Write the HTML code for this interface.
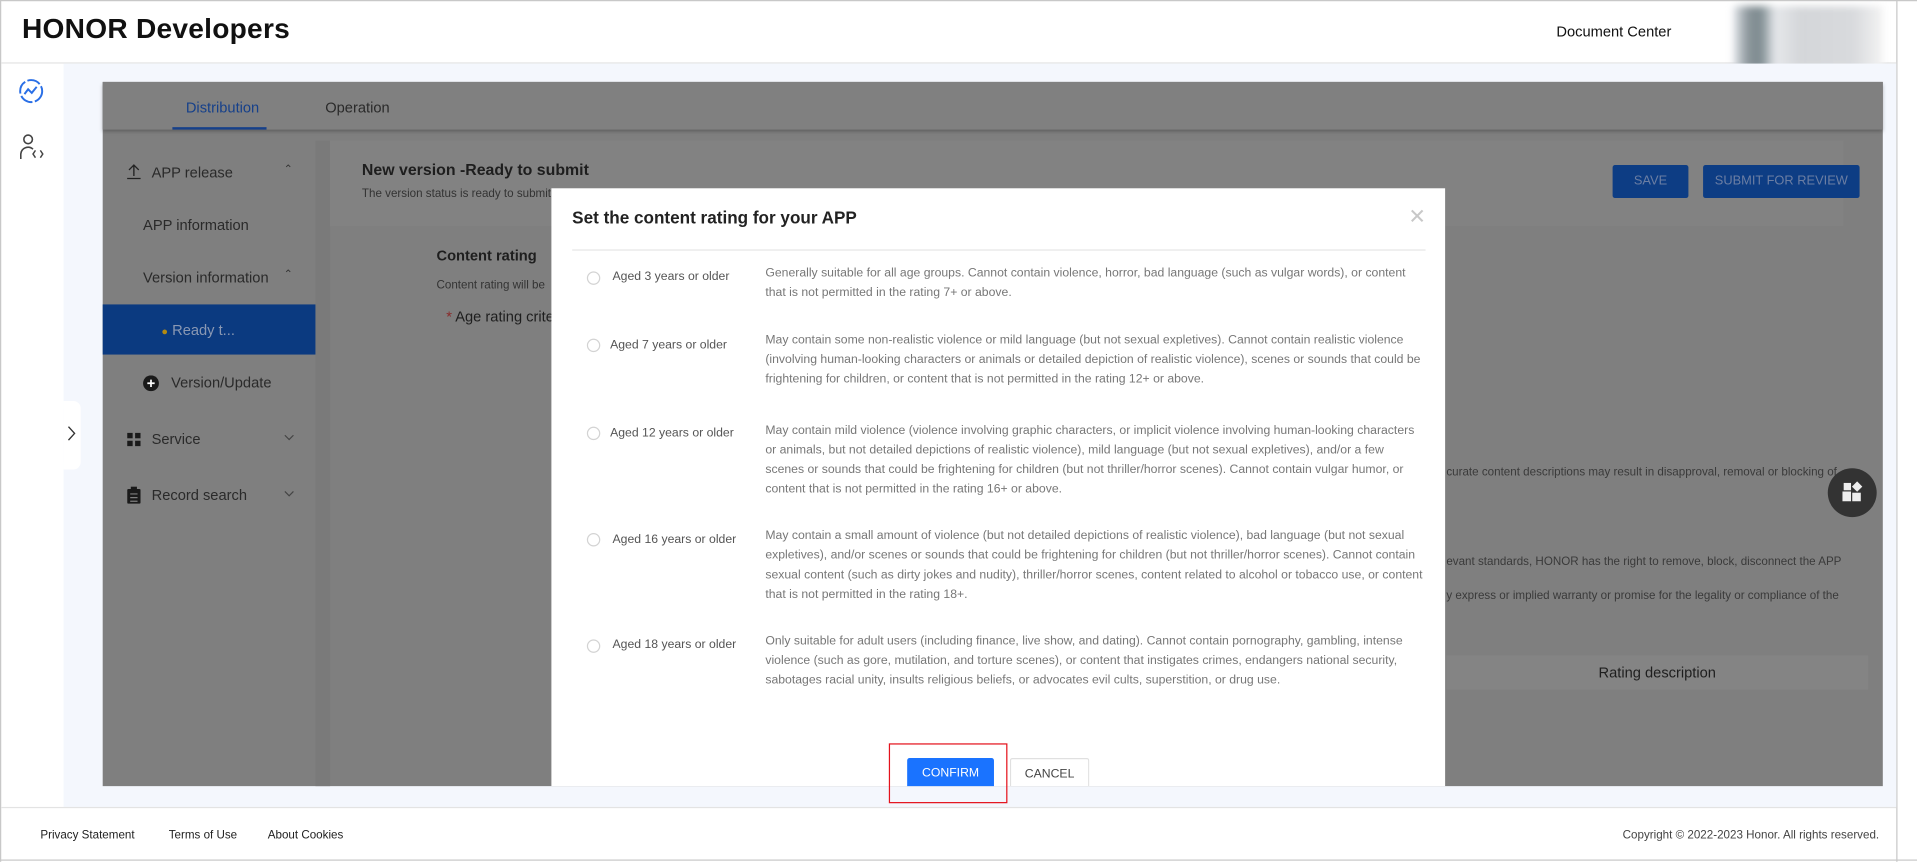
<!DOCTYPE html>
<html><head><meta charset="utf-8">
<style>
*{box-sizing:border-box;margin:0;padding:0}
html,body{width:1917px;height:862px;overflow:hidden;background:#fff;font-family:"Liberation Sans",sans-serif}
#w{position:absolute;left:0;top:0;width:1568px;height:705px;transform:scale(1.2226);transform-origin:0 0;overflow:hidden;background:#fff}
.a{position:absolute;white-space:nowrap}
.g{color:#2a2a2a}
.desc{font-size:10px;line-height:16px;color:#777}
.lab{font-size:10px;color:#555}
.rad{position:absolute;width:11px;height:11px;border:1px solid #d3d3d3;border-radius:50%;background:#fff}
</style></head><body><div id="w">
<!-- frame lines -->
<div class="a" style="left:0;top:0;width:1568px;height:1px;background:#c8c8c8"></div>
<div class="a" style="left:0;top:0;width:1px;height:705px;background:#c8c8c8"></div>
<div class="a" style="left:1551px;top:0;width:1px;height:705px;background:#c8c8c8"></div>
<div class="a" style="left:0;top:703px;width:1568px;height:1px;background:#c8c8c8"></div>
<!-- header -->
<div class="a" style="left:1px;top:51px;width:1550px;height:1px;background:#e3e3e3"></div>
<div class="a" style="left:18px;top:10px;font-size:23px;font-weight:bold;color:#111;letter-spacing:0.2px">HONOR Developers</div>
<div class="a" style="left:1273px;top:19px;font-size:12px;color:#111">Document Center</div>
<div class="a" style="left:1418px;top:5px;width:122px;height:52px;background:linear-gradient(90deg,#dfe3e8 0,#8a9499 10%,#7c8a8f 18%,#e6e8eb 28%,#d4d6d9 45%,#d8dadd 80%,#f3f3f3 100%);filter:blur(3px)"></div>
<!-- content bg -->
<div class="a" style="left:52px;top:52px;width:1499px;height:608px;background:#f4f7fd"></div>
<!-- rail icons -->
<svg class="a" style="left:15px;top:64px" width="21" height="21" viewBox="0 0 21 21"><circle cx="10.5" cy="10.5" r="9" fill="none" stroke="#2a6fe6" stroke-width="1.6" stroke-dasharray="11 2"/><path d="M5 13l3-4 3 3 4-5" fill="none" stroke="#2a6fe6" stroke-width="1.6"/></svg>
<svg class="a" style="left:15px;top:109px" width="22" height="22" viewBox="0 0 22 22"><circle cx="8" cy="5" r="3.5" fill="none" stroke="#444" stroke-width="1.3"/><path d="M2 21v-4a6 6 0 0 1 10-4" fill="none" stroke="#444" stroke-width="1.3"/><path d="M14 14l-2 3 2 3M18 14l2 3-2 3" fill="none" stroke="#444" stroke-width="1.2"/></svg>
<!-- grey masked panel -->
<div class="a" style="left:84px;top:67px;width:1456px;height:576px;background:#7f7f7f"></div>
<div class="a" style="left:84px;top:67px;width:1456px;height:39px;background:#808080;box-shadow:0 2px 3px rgba(0,0,0,.25)"></div>
<div class="a" style="left:152px;top:81px;font-size:12px;color:#16408a">Distribution</div>
<div class="a" style="left:141px;top:104px;width:77px;height:2px;background:#16408a"></div>
<div class="a g" style="left:266px;top:81px;font-size:12px">Operation</div>
<div class="a" style="left:258px;top:115px;width:12px;height:528px;background:#7a7a7a"></div>
<!-- sidebar -->
<svg class="a" style="left:103px;top:133px" width="13" height="14" viewBox="0 0 13 14"><path d="M6.5 11V2M2.5 6l4-4 4 4M1 13h11" fill="none" stroke="#222" stroke-width="1.1"/></svg>
<div class="a g" style="left:124px;top:134px;font-size:12px">APP release</div>
<div class="a" style="left:232px;top:133px;font-size:9px;color:#333">&#8963;</div>
<div class="a g" style="left:117px;top:177px;font-size:12px">APP information</div>
<div class="a g" style="left:117px;top:220px;font-size:12px">Version information</div>
<div class="a" style="left:232px;top:219px;font-size:9px;color:#333">&#8963;</div>
<div class="a" style="left:84px;top:249px;width:174px;height:41px;background:#0b3a80"></div>
<div class="a" style="left:132px;top:263px;font-size:12px;color:#8a98b3"><span style="color:#b38a12;font-size:9px">&#9679;</span> Ready t...</div>
<svg class="a" style="left:117px;top:307px" width="13" height="13"><circle cx="6.5" cy="6.5" r="6.5" fill="#1a1a1a"/><path d="M6.5 3.5v6M3.5 6.5h6" stroke="#fff" stroke-width="1.4"/></svg>
<div class="a g" style="left:140px;top:306px;font-size:12px">Version/Update</div>
<svg class="a" style="left:104px;top:354px" width="11" height="11"><rect x="0" y="0" width="4.5" height="4.5" fill="#1a1a1a"/><rect x="6.5" y="0" width="4.5" height="4.5" fill="#1a1a1a"/><rect x="0" y="6.5" width="4.5" height="4.5" fill="#1a1a1a"/><rect x="6.5" y="6.5" width="4.5" height="4.5" fill="#1a1a1a"/></svg>
<div class="a g" style="left:124px;top:352px;font-size:12px">Service</div>
<svg class="a" style="left:232px;top:355px" width="9" height="6"><path d="M1 1l3.5 3.5L8 1" fill="none" stroke="#444"/></svg>
<svg class="a" style="left:104px;top:398px" width="11" height="14"><rect x="0" y="2" width="11" height="12" rx="1" fill="#1a1a1a"/><rect x="3" y="0" width="5" height="3" fill="#1a1a1a"/><path d="M2.5 6h6M2.5 9h6M2.5 12h6" stroke="#7f7f7f" stroke-width="1"/></svg>
<div class="a g" style="left:124px;top:398px;font-size:12px">Record search</div>
<svg class="a" style="left:232px;top:401px" width="9" height="6"><path d="M1 1l3.5 3.5L8 1" fill="none" stroke="#444"/></svg>
<!-- collapse tab -->
<div class="a" style="left:52px;top:328px;width:14px;height:56px;background:#fff;border-radius:0 6px 6px 0"></div>
<svg class="a" style="left:55px;top:348px" width="7" height="13"><path d="M1 1l5 5.5L1 12" fill="none" stroke="#333" stroke-width="1.1"/></svg>
<!-- main -->
<div class="a" style="left:270px;top:115px;width:1238px;height:70px;background:#828282"></div>
<div class="a" style="left:296px;top:131px;font-size:13px;font-weight:bold;color:#1e1e1e">New version -Ready to submit</div>
<div class="a" style="left:296px;top:153px;font-size:9.5px;color:#333">The version status is ready to submit</div>
<div class="a" style="left:1319px;top:135px;width:62px;height:27px;background:#0d3d84;border-radius:2px;color:#6b7ea3;font-size:10.5px;text-align:center;line-height:27px">SAVE</div>
<div class="a" style="left:1393px;top:135px;width:128px;height:27px;background:#0d3d84;border-radius:2px;color:#6b7ea3;font-size:10.5px;text-align:center;line-height:27px">SUBMIT FOR REVIEW</div>
<div class="a" style="left:357px;top:202px;font-size:12px;font-weight:bold;color:#1e1e1e">Content rating</div>
<div class="a" style="left:357px;top:228px;font-size:9.5px;color:#333">Content rating will be</div>
<div class="a" style="left:365px;top:252px;font-size:12px;color:#1e1e1e"><span style="color:#8a2a2a">*</span> Age rating crite</div>
<div class="a" style="left:1183px;top:381px;font-size:9.5px;color:#3a3a3a">curate content descriptions may result in disapproval, removal or blocking of</div>
<div class="a" style="left:1183px;top:454px;font-size:9.5px;color:#3a3a3a">evant standards, HONOR has the right to remove, block, disconnect the APP</div>
<div class="a" style="left:1183px;top:482px;font-size:9.5px;color:#3a3a3a">y express or implied warranty or promise for the legality or compliance of the</div>
<div class="a" style="left:1183px;top:536px;width:345px;height:28px;background:#848484;font-size:12px;color:#1e1e1e;text-align:center;line-height:28px">Rating description</div>
<div class="a" style="left:1495px;top:383px;width:40px;height:40px;border-radius:50%;background:#333"></div>
<svg class="a" style="left:1505px;top:393px" width="20" height="20"><rect x="2" y="9" width="7" height="8" fill="#eee"/><rect x="10" y="10" width="7" height="7" fill="#eee"/><rect x="3" y="2" width="6" height="6" fill="#eee"/><rect x="11" y="2" width="6" height="6" fill="#eee" transform="rotate(45 14 5)"/></svg>
<!-- modal -->
<div class="a" style="left:451px;top:154px;width:731px;height:489px;background:#fff"></div>
<div class="a" style="left:468px;top:170px;font-size:14px;font-weight:bold;color:#222">Set the content rating for your APP</div>
<div class="a" style="left:1152px;top:168px;font-size:17px;color:#c8c8c8;font-weight:300">&#10005;</div>
<div class="a" style="left:468px;top:204px;width:698px;height:1px;background:#e6e6e6"></div>

<div class="rad" style="left:480px;top:222px"></div>
<div class="a lab" style="left:501px;top:221px">Aged 3 years or older</div>
<div class="a desc" style="left:626px;top:216px">Generally suitable for all age groups. Cannot contain violence, horror, bad language (such as vulgar words), or content<br>that is not permitted in the rating 7+ or above.</div>

<div class="rad" style="left:480px;top:277px"></div>
<div class="a lab" style="left:499px;top:277px">Aged 7 years or older</div>
<div class="a desc" style="left:626px;top:271px">May contain some non-realistic violence or mild language (but not sexual expletives). Cannot contain realistic violence<br>(involving human-looking characters or animals or detailed depiction of realistic violence), scenes or sounds that could be<br>frightening for children, or content that is not permitted in the rating 12+ or above.</div>

<div class="rad" style="left:480px;top:349px"></div>
<div class="a lab" style="left:499px;top:349px">Aged 12 years or older</div>
<div class="a desc" style="left:626px;top:345px">May contain mild violence (violence involving graphic characters, or implicit violence involving human-looking characters<br>or animals, but not detailed depictions of realistic violence), mild language (but not sexual expletives), and/or a few<br>scenes or sounds that could be frightening for children (but not thriller/horror scenes). Cannot contain vulgar humor, or<br>content that is not permitted in the rating 16+ or above.</div>

<div class="rad" style="left:480px;top:436px"></div>
<div class="a lab" style="left:501px;top:436px">Aged 16 years or older</div>
<div class="a desc" style="left:626px;top:431px">May contain a small amount of violence (but not detailed depictions of realistic violence), bad language (but not sexual<br>expletives), and/or scenes or sounds that could be frightening for children (but not thriller/horror scenes). Cannot contain<br>sexual content (such as dirty jokes and nudity), thriller/horror scenes, content related to alcohol or tobacco use, or content<br>that is not permitted in the rating 18+.</div>

<div class="rad" style="left:480px;top:523px"></div>
<div class="a lab" style="left:501px;top:522px">Aged 18 years or older</div>
<div class="a desc" style="left:626px;top:517px">Only suitable for adult users (including finance, live show, and dating). Cannot contain pornography, gambling, intense<br>violence (such as gore, mutilation, and torture scenes), or content that instigates crimes, endangers national security,<br>sabotages racial unity, insults religious beliefs, or advocates evil cults, superstition, or drug use.</div>

<div class="a" style="left:742px;top:620px;width:71px;height:23px;background:#1a73ff;border-radius:2px 2px 0 0;color:#fff;font-size:10px;text-align:center;line-height:26px">CONFIRM</div>
<div class="a" style="left:826px;top:620px;width:65px;height:23px;border:1px solid #e0e0e0;border-bottom:none;border-radius:2px 2px 0 0;color:#444;font-size:10px;text-align:center;line-height:26px">CANCEL</div>
<div class="a" style="left:727px;top:608px;width:97px;height:49px;border:1.5px solid #e4121c"></div>
<!-- footer -->
<div class="a" style="left:1px;top:660px;width:1550px;height:1px;background:#e3e3e3"></div>
<div class="a" style="left:33px;top:678px;font-size:9.5px;color:#222">Privacy Statement</div>
<div class="a" style="left:138px;top:678px;font-size:9.5px;color:#222">Terms of Use</div>
<div class="a" style="left:219px;top:678px;font-size:9.5px;color:#222">About Cookies</div>
<div class="a" style="right:31px;top:678px;font-size:9.5px;color:#444">Copyright © 2022-2023 Honor. All rights reserved.</div>
</div></body></html>
